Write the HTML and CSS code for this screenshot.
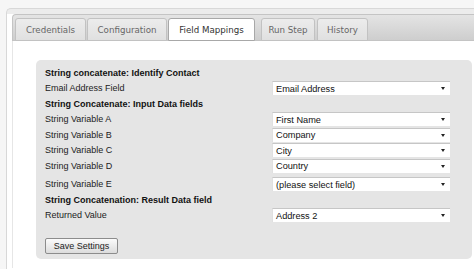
FILE: index.html
```html
<!DOCTYPE html>
<html>
<head>
<meta charset="utf-8">
<link rel="stylesheet" href="styles.css">
</head>
<body>
<div class="frame">
  <ul class="tabs">
    <li class="tab t-cred">Credentials</li>
    <li class="tab t-conf">Configuration</li>
    <li class="tab t-field active">Field Mappings</li>
    <li class="tab t-run">Run Step</li>
    <li class="tab t-hist">History</li>
  </ul>
  <div class="tabpanel">
    <div class="panel">
      <div class="hdr">String concatenate: Identify Contact</div>
      <div class="row"><span class="lbl">Email Address Field</span><div class="sel"><span>Email Address</span><i class="arr"></i></div></div>
      <div class="hdr">String Concatenate: Input Data fields</div>
      <div class="row"><span class="lbl">String Variable A</span><div class="sel"><span>First Name</span><i class="arr"></i></div></div>
      <div class="row"><span class="lbl">String Variable B</span><div class="sel"><span>Company</span><i class="arr"></i></div></div>
      <div class="row"><span class="lbl">String Variable C</span><div class="sel"><span>City</span><i class="arr"></i></div></div>
      <div class="row"><span class="lbl">String Variable D</span><div class="sel"><span>Country</span><i class="arr"></i></div></div>
      <div class="row row-gap"><span class="lbl">String Variable E</span><div class="sel"><span>(please select field)</span><i class="arr"></i></div></div>
      <div class="hdr">String Concatenation: Result Data field</div>
      <div class="row"><span class="lbl">Returned Value</span><div class="sel"><span>Address 2</span><i class="arr"></i></div></div>
      <button class="btn">Save Settings</button>
    </div>
  </div>
</div>
</body>
</html>
```
FILE: styles.css
```css
html, body {
  margin: 0;
  padding: 0;
  overflow: hidden;
  background: #f6f6f6;
  font-family: "Liberation Sans", Arial, sans-serif;
}

.frame {
  margin: 8px 0 0 6px;
  width: 468px;
  height: 261px;
  box-sizing: border-box;
  border: 1px solid #d8d8d8;
  border-right: 0;
  border-bottom: 0;
  border-radius: 5px 0 0 0;
  padding: 5px 0 0 5px;
  background: linear-gradient(#ececec 0, #ececec 5px, #ffffff 5px);
}

.tabs {
  list-style: none;
  margin: 0;
  padding: 0 0 0 2px;
  height: 27px;
  box-sizing: border-box;
  border: 1px solid #c4c4c4;
  border-right: 0;
  border-radius: 4px 0 0 0;
  background: linear-gradient(#e4e4e4, #cecece);
  display: flex;
  align-items: flex-end;
}

.tab {
  height: 23px;
  box-sizing: border-box;
  margin-bottom: -1px;
  border: 1px solid #c2c2c2;
  border-radius: 3px 3px 0 0;
  background: linear-gradient(#ececec, #e0e0e0);
  color: #666666;
  font-family: "DejaVu Sans", Verdana, sans-serif;
  font-size: 8.7px;
  display: flex;
  align-items: center;
  justify-content: center;
}

.tab.active {
  background: #ffffff;
  border-color: #a8a8a8;
  color: #333333;
}

.t-cred { width: 71px; margin-right: 1px; }
.t-conf { width: 80px; margin-right: 1px; }
.t-field { width: 87px; margin-right: 6px; }
.t-run { width: 54px; margin-right: 2px; }
.t-hist { width: 51px; }

.tabpanel {
  border-left: 1px solid #e6e6e6;
  padding: 19px 0 0 23px;
  height: 208px;
}

.panel {
  width: 436px;
  box-sizing: border-box;
  background: #e5e5e5;
  border-radius: 5px;
  padding: 5px 0 5px 9px;
  font-size: 9px;
  color: #222222;
}

.hdr {
  height: 15.5px;
  display: flex;
  align-items: center;
  font-weight: bold;
  color: #111111;
}

.row {
  height: 15.5px;
  display: grid;
  grid-template-columns: 227px 178px;
  align-items: center;
}

.row-gap {
  margin-top: 3px;
}

.sel {
  height: 14px;
  box-sizing: border-box;
  background: #ffffff;
  border-top: 1px solid #c6c6c6;
  border-left: 1px solid #e0e0e0;
  padding-left: 3px;
  display: flex;
  align-items: center;
  color: #111111;
  font-size: 9.2px;
}

.arr {
  margin-left: auto;
  margin-right: 5px;
  width: 0;
  height: 0;
  border-left: 2.5px solid transparent;
  border-right: 2.5px solid transparent;
  border-top: 3px solid #222222;
}

.btn {
  display: block;
  margin-top: 15px;
  width: 73px;
  height: 16px;
  padding: 0;
  border: 1px solid #8c8c8c;
  border-radius: 2px;
  background: linear-gradient(#fbfbfb, #dcdcdc);
  font-family: "Liberation Sans", Arial, sans-serif;
  font-size: 9px;
  color: #222222;
}
```
